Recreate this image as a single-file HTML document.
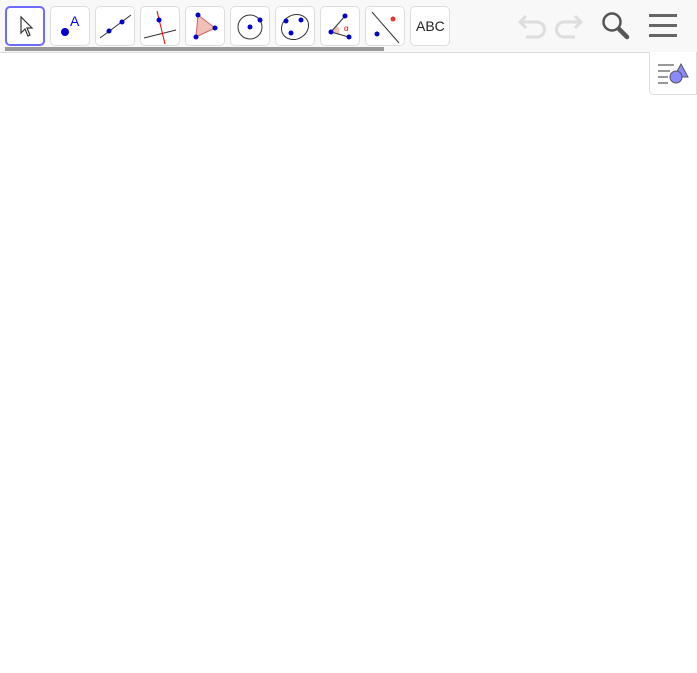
<!DOCTYPE html>
<html><head><style>
body{margin:0;width:697px;height:673px;background:#fff;position:relative;overflow:hidden;font-family:"Liberation Sans",sans-serif}
.bar{position:absolute;left:0;top:0;width:697px;height:52px;background:#f8f8f8;border-bottom:1px solid #ddd}
.b{position:absolute;top:6px;width:38px;height:38px;background:#fff;border:1px solid #ddd;border-radius:5px}
.b svg{position:absolute;left:0;top:0}
.sel{border:2px solid #6c6cff;width:36px;height:36px}
.scroll{position:absolute;left:5px;top:47px;width:379px;height:4px;background:#999}
</style></head><body>
<div class="bar"></div>
<div class="b sel" style="left:5px"><svg width="36" height="36"><path d="M14 9 L14 25 L18 21 L21 28 L23 27 L20 20 L25 20 Z" fill="#fff" stroke="#333" stroke-width="1.2"/></svg></div>
<div class="b" style="left:50px"><svg width="38" height="38"><circle cx="14" cy="25" r="4" fill="#00c"/><text x="19" y="19" font-size="14" fill="#00f" font-family="Liberation Sans">A</text></svg></div>
<div class="b" style="left:95px"><svg width="38" height="38"><line x1="4" y1="31" x2="35" y2="8" stroke="#333"/><circle cx="13" cy="24" r="2.5" fill="#00c"/><circle cx="26" cy="15" r="2.5" fill="#00c"/></svg></div>
<div class="b" style="left:140px"><svg width="38" height="38"><line x1="3" y1="31" x2="35" y2="23" stroke="#333"/><line x1="16" y1="4" x2="24" y2="37" stroke="#e00"/><circle cx="18" cy="13" r="2.5" fill="#00c"/></svg></div>
<div class="b" style="left:185px"><svg width="38" height="38"><path d="M12 8 L29 21 L10 30 Z" fill="#f0c0b8" stroke="#c66"/><circle cx="12" cy="8" r="2.5" fill="#00c"/><circle cx="29" cy="21" r="2.5" fill="#00c"/><circle cx="10" cy="30" r="2.5" fill="#00c"/></svg></div>
<div class="b" style="left:230px"><svg width="38" height="38"><circle cx="19" cy="20" r="12" fill="none" stroke="#333"/><circle cx="19" cy="20" r="2.5" fill="#00c"/><circle cx="29" cy="13" r="2.5" fill="#00c"/></svg></div>
<div class="b" style="left:275px"><svg width="38" height="38"><ellipse cx="19" cy="20" rx="14" ry="12" transform="rotate(-30 19 20)" fill="none" stroke="#333"/><circle cx="10" cy="14" r="2.5" fill="#00c"/><circle cx="25" cy="13" r="2.5" fill="#00c"/><circle cx="15" cy="26" r="2.5" fill="#00c"/></svg></div>
<div class="b" style="left:320px"><svg width="38" height="38"><path d="M10 25 L16 19 A8 8 0 0 1 18 28 Z" fill="#f3c0b8"/><line x1="10" y1="25" x2="24" y2="9" stroke="#333"/><line x1="10" y1="25" x2="28" y2="30" stroke="#333"/><circle cx="24" cy="9" r="2.5" fill="#00c"/><circle cx="10" cy="25" r="2.5" fill="#00c"/><circle cx="28" cy="30" r="2.5" fill="#00c"/><text x="23" y="24" font-size="8" fill="#e00">α</text></svg></div>
<div class="b" style="left:365px"><svg width="38" height="38"><line x1="6" y1="5" x2="33" y2="36" stroke="#333"/><circle cx="27" cy="12" r="2.5" fill="#e33"/><circle cx="11" cy="27" r="2.5" fill="#00c"/></svg></div>
<div class="b" style="left:410px"><span style="position:absolute;left:5px;top:11px;font-size:14px;color:#222">ABC</span></div>
<div class="scroll"></div>
<svg style="position:absolute;left:0;top:0" width="697" height="52">
<path d="M526 16 L520 22 L526 28 M520 22 H537 A7.5 7.5 0 0 1 537 37 H526" fill="none" stroke="#ddd" stroke-width="3"/>
<path d="M575 16 L581 22 L575 28 M581 22 H564 A7.5 7.5 0 0 0 564 37 H575" fill="none" stroke="#ddd" stroke-width="3"/>
<circle cx="612" cy="22" r="8.5" fill="none" stroke="#555" stroke-width="2.5"/>
<line x1="619" y1="29" x2="627" y2="37" stroke="#555" stroke-width="4.5" stroke-linecap="round"/>
<rect x="649" y="14" width="28" height="3" fill="#666"/><rect x="649" y="24" width="28" height="3" fill="#666"/><rect x="649" y="34" width="28" height="3" fill="#666"/>
</svg>
<div style="position:absolute;left:649px;top:52px;width:46px;height:42px;background:#fff;border:1px solid #ddd;border-top:none;border-radius:0 0 0 5px"></div>
<svg style="position:absolute;left:655px;top:60px" width="36" height="28">
<rect x="3" y="4" width="16" height="2" fill="#999"/><rect x="3" y="10" width="12" height="2" fill="#999"/><rect x="3" y="16" width="10" height="2" fill="#999"/><rect x="3" y="22" width="10" height="2" fill="#999"/>
<path d="M26 4 L33 17 L19 17 Z" fill="#8a8aff" stroke="#555"/>
<circle cx="21" cy="17" r="6" fill="#8a8aff" stroke="#555"/>
</svg>
</body></html>
